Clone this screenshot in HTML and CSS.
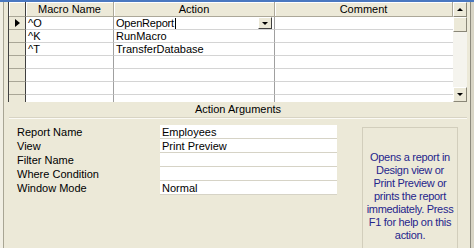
FILE: index.html
```html
<!DOCTYPE html>
<html>
<head>
<meta charset="utf-8">
<link rel="stylesheet" href="styles.css">
</head>
<body>
<div class="topbar"></div>
<div class="window">
  <div class="leftedge"></div>
  <div class="content">
    <div class="gridpane">
      <div class="grid">
        <div class="hcell sel"></div>
        <div class="hcell">Macro Name</div>
        <div class="hcell">Action</div>
        <div class="hcell">Comment</div>

        <div class="sel cur"><span class="tri"></span></div>
        <div class="cell">^O</div>
        <div class="cell combo"><span class="ctext">OpenReport</span><span class="caret"></span><span class="dd"><span class="ddtri"></span></span></div>
        <div class="cell"></div>

        <div class="sel"></div>
        <div class="cell">^K</div>
        <div class="cell">RunMacro</div>
        <div class="cell"></div>

        <div class="sel"></div>
        <div class="cell">^T</div>
        <div class="cell">TransferDatabase</div>
        <div class="cell"></div>

        <div class="sel"></div><div class="cell"></div><div class="cell"></div><div class="cell"></div>
        <div class="sel"></div><div class="cell"></div><div class="cell"></div><div class="cell"></div>
        <div class="sel"></div><div class="cell"></div><div class="cell"></div><div class="cell"></div>
        <div class="sel short"></div><div class="cell short"></div><div class="cell short"></div><div class="cell short"></div>
      </div>
      <div class="scrollbar">
        <div class="sbtn"><span class="uptri"></span></div>
        <div class="thumb"></div>
        <div class="track"></div>
        <div class="sbtn"><span class="dntri"></span></div>
      </div>
    </div>
    <div class="argbar">Action Arguments</div>
    <div class="lower">
      <div class="args">
        <div class="lbl">Report Name</div><div class="fld">Employees</div>
        <div class="lbl">View</div><div class="fld">Print Preview</div>
        <div class="lbl">Filter Name</div><div class="fld"></div>
        <div class="lbl">Where Condition</div><div class="fld"></div>
        <div class="lbl">Window Mode</div><div class="fld">Normal</div>
      </div>
      <div class="help">Opens a report in<br>Design view or<br>Print Preview or<br>prints the report<br>immediately. Press<br>F1 for help on this<br>action.</div>
    </div>
  </div>
  <div class="rightedge"></div>
</div>
</body>
</html>
```
FILE: styles.css
```css
html, body {
  margin: 0;
  padding: 0;
  width: 474px;
  height: 248px;
  overflow: hidden;
  background: #ece9d8;
  font-family: "Liberation Sans", Arial, sans-serif;
  font-size: 11px;
  color: #000;
}
.topbar {
  height: 2px;
  background: #4a78c0;
}
.window {
  display: flex;
  height: 246px;
}
.leftedge {
  width: 3px;
  margin-right: 5px;
  border-right: 1px solid #a8a594;
  background: #f1efe4;
}
.rightedge {
  width: 3px;
  margin-left: 3px;
  border-left: 1px solid #8c8a7e;
  background: #d8d5c6;
}
.content {
  flex: 1;
  display: flex;
  flex-direction: column;
  min-width: 0;
}
.gridpane {
  display: flex;
  height: 100px;
}
.grid {
  display: grid;
  grid-template-columns: 17px 88px 161px 178px;
  grid-template-rows: 15px repeat(6, 13px) 7px;
  background: #fff;
  border-left: 1px solid #404040;
  margin-left: -1px;
}
.hcell {
  background: #ece9d8;
  border-right: 1px solid #aca899;
  border-bottom: 1px solid #aca899;
  box-shadow: inset 1px 1px 0 #fff;
  text-align: center;
  line-height: 14px;
  box-sizing: border-box;
}
.hcell.sel {
  border-right: 1px solid #404040;
}
.sel {
  background: #ece9d8;
  border-right: 1px solid #404040;
  border-bottom: 1px solid #a9a696;
  box-sizing: border-box;
  position: relative;
}
.cur .tri {
  position: absolute;
  left: 6px;
  top: 2px;
  width: 0;
  height: 0;
  border-top: 4px solid transparent;
  border-bottom: 4px solid transparent;
  border-left: 5px solid #000;
}
.cell {
  border-right: 1px solid #a0a0a0;
  border-bottom: 1px solid #d4d4d4;
  box-sizing: border-box;
  padding-left: 2px;
  line-height: 12px;
  white-space: nowrap;
  overflow: hidden;
}
.cell:nth-child(4n) {
  border-right: none;
}
.short {
  border-bottom: none;
}
.combo {
  display: flex;
  align-items: center;
  position: relative;
}
.ctext {
  letter-spacing: -0.2px;
}
.caret {
  width: 1px;
  height: 11px;
  background: #000;
  margin-left: 1px;
}
.dd {
  position: absolute;
  right: 2px;
  top: 0;
  width: 14px;
  height: 12px;
  box-sizing: border-box;
  background: #ece9d8;
  border: 1px solid;
  border-color: #fff #404040 #404040 #fff;
  display: flex;
  align-items: center;
  justify-content: center;
}
.ddtri {
  width: 0;
  height: 0;
  border-left: 3px solid transparent;
  border-right: 3px solid transparent;
  border-top: 3px solid #000;
}
.scrollbar {
  width: 15px;
  display: flex;
  flex-direction: column;
  background: #f5f4ee;
}
.sbtn {
  height: 15px;
  box-sizing: border-box;
  background: #ece9d8;
  border: 1px solid;
  border-color: #fff #8a8778 #8a8778 #fff;
  display: flex;
  align-items: center;
  justify-content: center;
}
.uptri {
  width: 0;
  height: 0;
  border-left: 3px solid transparent;
  border-right: 3px solid transparent;
  border-bottom: 3px solid #000;
}
.dntri {
  width: 0;
  height: 0;
  border-left: 3px solid transparent;
  border-right: 3px solid transparent;
  border-top: 3px solid #000;
}
.thumb {
  height: 15px;
  box-sizing: border-box;
  background: #ece9d8;
  border: 1px solid;
  border-color: #fff #8a8778 #8a8778 #fff;
}
.track {
  flex: 1;
}
.argbar {
  height: 15px;
  line-height: 15px;
  text-align: center;
  border-bottom: 1px solid #d8d4c4;
  box-shadow: 0 1px 0 #fbfaf5;
}
.lower {
  flex: 1;
  display: flex;
  padding: 7px 0 0 8px;
}
.args {
  display: grid;
  grid-template-columns: 143px 177px;
  grid-auto-rows: 14px;
  align-content: start;
}
.lbl {
  line-height: 15px;
}
.fld {
  background: #fff;
  border-bottom: 1px solid #d6d3c6;
  padding-left: 2px;
  line-height: 14px;
}
.help {
  margin-left: 25px;
  margin-top: 2px;
  width: 96px;
  box-sizing: border-box;
  border: 1px solid #d2cebc;
  border-bottom: none;
  padding: 23px 0 0;
  text-align: center;
  white-space: nowrap;
  letter-spacing: -0.3px;
  color: #25258c;
  line-height: 13px;
}
```
